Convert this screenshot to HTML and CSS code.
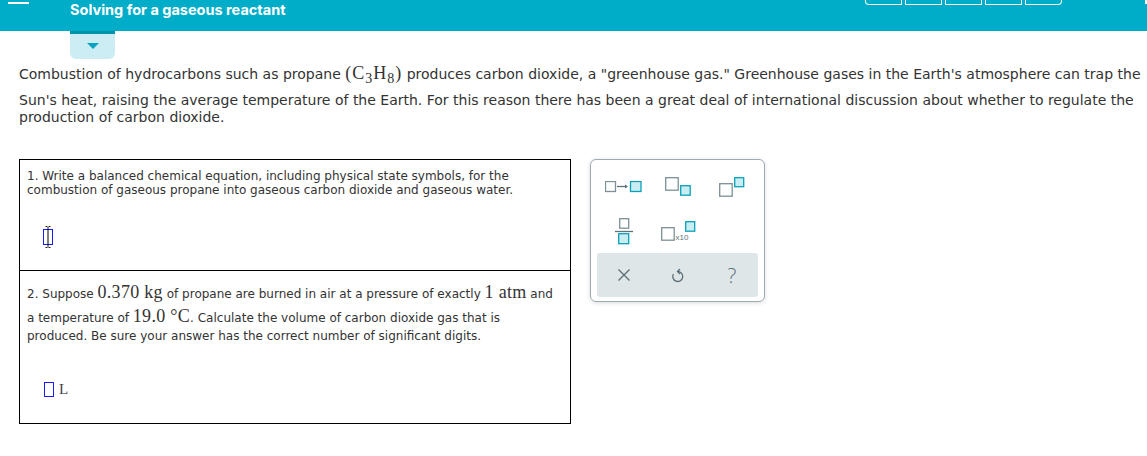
FILE: index.html
```html
<!DOCTYPE html>
<html>
<head>
<meta charset="utf-8">
<link rel="stylesheet" href="styles.css">
</head>
<body>
<header class="topbar">
  <div class="menu"></div>
  <div class="title">Solving for a gaseous reactant</div>
  <div class="segments">
    <span class="seg"></span><span class="seg"></span><span class="seg"></span><span class="seg"></span><span class="seg"></span>
  </div>
  <div class="mark"></div>
</header>
<div class="tab"><span class="tri"></span></div>

<p class="intro">Combustion of hydrocarbons such as propane <span class="math">(C<span class="sub">3</span>H<span class="sub">8</span>)</span> produces carbon dioxide, a "greenhouse gas." Greenhouse gases in the Earth's atmosphere can trap the Sun's heat, raising the average temperature of the Earth. For this reason there has been a great deal of international discussion about whether to regulate the production of carbon dioxide.</p>

<div class="main">
  <div class="qbox">
    <div class="q q1">
      <p class="qtext">1. Write a balanced chemical equation, including physical state symbols, for the combustion of gaseous propane into gaseous carbon dioxide and gaseous water.</p>
      <div class="answer">
        <svg class="cursor" width="14" height="24" viewBox="0 0 14 24">
          <path d="M4.5 1.5h2M7.5 1.5h2M7 2v2M4.5 22.5h2M7.5 22.5h2M7 20v2" stroke="#222" stroke-width="1" fill="none"/>
          <rect x="2.5" y="4.5" width="9" height="15" fill="#fff" stroke="#1a1aff" stroke-width="1"/>
          <path d="M7 4v16" stroke="#000" stroke-width="1"/>
        </svg>
      </div>
    </div>
    <div class="q q2">
      <p class="qtext">2. Suppose <span class="m2">0.370 kg</span> of propane are burned in air at a pressure of exactly <span class="m2">1 atm</span> and a temperature of <span class="m2">19.0 °C</span>. Calculate the volume of carbon dioxide gas that is produced. Be sure your answer has the correct number of significant digits.</p>
      <div class="answer2"><span class="ansbox"></span><span class="unit">L</span></div>
    </div>
  </div>

  <div class="panel">
    <div class="tools">
      <div class="tool">
        <svg width="38" height="12" viewBox="0 0 38 12">
          <rect x="0.5" y="0.5" width="10" height="10" fill="#fff" stroke="#7d9096" stroke-width="1.3"/>
          <path d="M12 5.5h9" stroke="#5d7178" stroke-width="1.3"/>
          <path d="M20 3.5l3 2-3 2z" fill="#5d7178"/>
          <rect x="25.5" y="0.5" width="10.5" height="10" fill="#c8edf3" stroke="#0aa0b8" stroke-width="1.3"/>
        </svg>
      </div>
      <div class="tool">
        <svg width="27" height="20" viewBox="0 0 27 20">
          <rect x="0.7" y="0.7" width="12.5" height="12.5" fill="#fff" stroke="#7d9096" stroke-width="1.3"/>
          <rect x="15.7" y="8.7" width="9.5" height="9.5" fill="#c8edf3" stroke="#0aa0b8" stroke-width="1.3"/>
        </svg>
      </div>
      <div class="tool">
        <svg width="26" height="20" viewBox="0 0 26 20">
          <rect x="0.7" y="6.7" width="12.5" height="12.5" fill="#fff" stroke="#7d9096" stroke-width="1.3"/>
          <rect x="15.7" y="0.7" width="9" height="9" fill="#c8edf3" stroke="#0aa0b8" stroke-width="1.3"/>
        </svg>
      </div>
      <div class="tool">
        <svg width="18" height="27" viewBox="0 0 18 27">
          <rect x="4.7" y="0.7" width="9" height="9.5" fill="#fff" stroke="#7d9096" stroke-width="1.3"/>
          <path d="M0 13.5h18" stroke="#5d7178" stroke-width="1.3"/>
          <rect x="3.7" y="15.7" width="10" height="10" fill="#c8edf3" stroke="#0aa0b8" stroke-width="1.3"/>
        </svg>
      </div>
      <div class="tool">
        <svg width="35" height="20" viewBox="0 0 35 20">
          <rect x="0.7" y="6.7" width="12.5" height="12.5" fill="#fff" stroke="#7d9096" stroke-width="1.3"/>
          <text x="14.5" y="18.5" font-family="Liberation Sans, Arial, sans-serif" font-size="8" fill="#5d7178">x10</text>
          <rect x="24.7" y="0.7" width="9" height="9.5" fill="#c8edf3" stroke="#0aa0b8" stroke-width="1.3"/>
        </svg>
      </div>
      <div class="tool"></div>
    </div>
    <div class="actions">
      <div class="act">
        <svg width="14" height="14" viewBox="0 0 14 14"><path d="M1.5 1.5l11 11M12.5 1.5l-11 11" stroke="#5a6e76" stroke-width="1.3" fill="none"/></svg>
      </div>
      <div class="act">
        <svg width="14" height="16" viewBox="0 0 14 16"><path d="M6.5 4.5A5 5 0 1 1 2.4 7" stroke="#5a6e76" stroke-width="1.3" fill="none"/><path d="M9 2L6.5 4.5 9 7" stroke="#5a6e76" stroke-width="1.3" fill="none"/></svg>
      </div>
      <div class="act q-mark">?</div>
    </div>
  </div>
</div>
</body>
</html>
```

FILE: styles.css
```css
* { box-sizing: border-box; }
html, body { margin: 0; padding: 0; background: #fff; }
body { font-family: "DejaVu Sans", Verdana, sans-serif; color: #333; }

.topbar {
  height: 31px;
  background: #00adc8;
  display: flex;
  align-items: flex-start;
}
.menu {
  width: 21px;
  height: 2px;
  background: #fff;
  margin: 2px 0 0 8px;
}
.title {
  margin-left: 41px;
  font-family: Inter, "Open Sans", sans-serif;
  font-weight: 700;
  font-size: 14.5px;
  line-height: 20px;
  color: #fff;
}
.segments {
  margin-left: auto;
  display: flex;
  gap: 3px;
}
.seg {
  width: 37px;
  height: 5px;
  border: 1px solid #fff;
  border-top: none;
}
.seg:first-child { border-bottom-left-radius: 4px; }
.seg:last-child { border-bottom-right-radius: 4px; }
.mark {
  width: 2px;
  height: 4px;
  background: #e8f8fb;
  margin-left: 83px;
}

.tab {
  margin-left: 70px;
  width: 45px;
  height: 28px;
  background: #ccedf3;
  border-top: 3px solid #0092aa;
  border-radius: 0 0 6px 6px;
  display: flex;
  justify-content: center;
  padding-top: 9px;
}
.tri {
  width: 0; height: 0;
  border-left: 6px solid transparent;
  border-right: 6px solid transparent;
  border-top: 6px solid #06a4c2;
}

.intro {
  margin: 6px 6px 0 19px;
  font-size: 14px;
  line-height: 17px;
}
.math {
  display: inline-block;
  font-family: "Liberation Serif", "Times New Roman", serif;
  font-size: 18px;
  letter-spacing: 1px;
  line-height: 17px;
  padding-bottom: 6px;
}
.sub {
  font-size: 14px;
  vertical-align: -4px;
  line-height: 1;
}

.main {
  display: flex;
  align-items: flex-start;
  margin: 33px 0 0 19px;
  gap: 19px;
}
.qbox {
  width: 552px;
  height: 265px;
  border: 1px solid #000;
  display: flex;
  flex-direction: column;
}
.q1 {
  height: 111px;
  border-bottom: 1px solid #000;
  padding: 9px 7px 0 7px;
}
.qtext {
  margin: 0;
  font-size: 12px;
  line-height: 14px;
}
.answer { padding: 28px 0 0 14px; }
.cursor { display: block; }

.q2 {
  flex: 1;
  padding: 9px 10px 0 7px;
}
.q2 .qtext { line-height: 16px; }
.m2 {
  font-family: "Liberation Serif", "Times New Roman", serif;
  font-size: 18px;
  letter-spacing: 0.3px;
  line-height: 24px;
}
.answer2 {
  display: flex;
  align-items: center;
  gap: 5px;
  padding: 37px 0 0 17px;
}
.ansbox {
  width: 10px;
  height: 15px;
  border: 1px solid #1a1aff;
}
.unit {
  font-family: "Liberation Serif", "Times New Roman", serif;
  font-size: 15px;
  color: #444;
}

.panel {
  width: 175px;
  height: 143px;
  border: 1px solid #9aabb1;
  border-radius: 6px;
  box-shadow: 0 1px 4px rgba(0,0,0,0.15);
  padding: 5px 6px 4px 6px;
  display: flex;
  flex-direction: column;
}
.tools {
  display: grid;
  grid-template-columns: repeat(3, 54px);
  grid-auto-rows: 44px;
}
.tool {
  display: flex;
  align-items: center;
  justify-content: center;
}
.tool svg { display: block; }
.actions {
  flex: none;
  height: 44px;
  background: #dfe6e8;
  border-radius: 3px;
  display: grid;
  grid-template-columns: repeat(3, 54px);
  align-items: center;
}
.act {
  display: flex;
  justify-content: center;
  align-items: center;
}
.q-mark {
  font-family: "Open Sans", sans-serif;
  font-weight: 300;
  font-size: 21px;
  color: #5a6e76;
  line-height: 1;
}
```
